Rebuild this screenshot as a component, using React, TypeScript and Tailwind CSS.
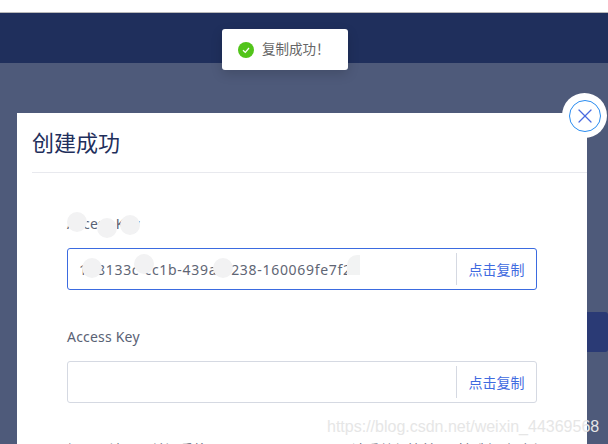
import { X } from "lucide-react";

const blots = [
  "left-[67px] top-[212px] h-5 w-5",
  "left-[97px] top-[218px] h-5 w-5",
  "left-[120px] top-[215px] h-5 w-5",
  "left-[82px] top-[258px] h-5 w-5",
  "left-[134px] top-[254px] h-5 w-5",
  "left-[213px] top-[258px] h-5 w-5",
];

function KeyField({ label, value, active }: { label: string; value?: string; active?: boolean }) {
  return (
    <div>
      <p className="text-[14px] leading-[20px] tracking-[0.2px] text-[#5a6275]">{label}</p>
      <div className={`mt-[14px] flex h-[42px] items-center rounded-[3px] border ${active ? "border-[#3b6be0]" : "border-[#d5d9e2]"}`}>
        <span className="flex-1 pl-[11px] text-[14px] tracking-[0.7px] text-[#5f6675]">{value}</span>
        <span className="h-[32px] w-px bg-[#d5d9e2]" />
        <span className="w-[79px] text-center text-[14px] text-[#3f6be0]">点击复制</span>
      </div>
    </div>
  );
}

export default function App() {
  return (
    <div className="relative h-[444px] w-[608px] overflow-hidden bg-white font-['Noto_Sans','Noto_Sans_CJK_SC',sans-serif]">
      <div className="h-[13px] border-b border-[#b9b9b9] bg-white" />
      <div className="h-[50px] bg-[#1f2f5c]" />
      <div className="h-[381px] bg-[#4e5a7a] pl-[17px] pt-[50px]">
        <div className="h-[400px] w-[570px] bg-white pl-[15px]">
          <h2 className="flex h-[59px] items-center text-[22px] text-[#1f2f5c]">创建成功</h2>
          <div className="h-px bg-[#e8e9ee]" />
          <div className="w-[505px] space-y-[37px] pl-[35px] pt-[41px]">
            <KeyField label="Access Key" value="1b8133c-cc1b-439a-8238-160069fe7f2." active />
            <KeyField label="Access Key" />
          </div>
          <p className="mt-[37px] whitespace-nowrap pl-[35px] text-[14px] leading-[20px] text-[#6a7080]">
            提示：该页面关闭后将不再显示 Access Key，请妥善保管并及时复制，如有问题
          </p>
        </div>
      </div>

      <div className="absolute left-[587px] top-[312px] h-10 w-[21px] rounded-r-[3px] bg-[#2a3a75]" />

      <div className="absolute left-[222px] top-[29px] flex h-[41px] w-[126px] items-center gap-2 rounded-[3px] bg-white pl-4 shadow-[0_4px_12px_rgba(0,0,0,0.15)]">
        <span className="flex h-4 w-4 items-center justify-center rounded-full bg-[#52c41a]">
          <svg viewBox="0 0 10 10" className="h-2.5 w-2.5" fill="none" stroke="white" strokeWidth="1.3">
            <path d="M2 5.2 4.3 7.4 8 3" />
          </svg>
        </span>
        <span className="text-[13.5px] text-[#666666]">复制成功！</span>
      </div>

      <div className="absolute left-[562px] top-[93px] flex h-[45px] w-[45px] items-center justify-center rounded-full bg-white">
        <div className="flex h-8 w-8 items-center justify-center rounded-full border border-[#2a8cf0]">
          <X size={24} strokeWidth={1.2} className="text-[#4a6ae0]" />
        </div>
      </div>

      {blots.map((cls) => (
        <div key={cls} className={`absolute rounded-full bg-[#f2f2f3] ${cls}`} />
      ))}
      <div className="absolute left-[347px] top-[255px] h-5 w-[13px] rounded-tl-[10px] bg-[#f2f3f3]" />

      <span className="absolute left-[327px] top-[415px] font-['Liberation_Sans',sans-serif] text-[16px] text-[#e6e6e6]">
        https://blog.csdn.net/weixin_44369568
      </span>
    </div>
  );
}
